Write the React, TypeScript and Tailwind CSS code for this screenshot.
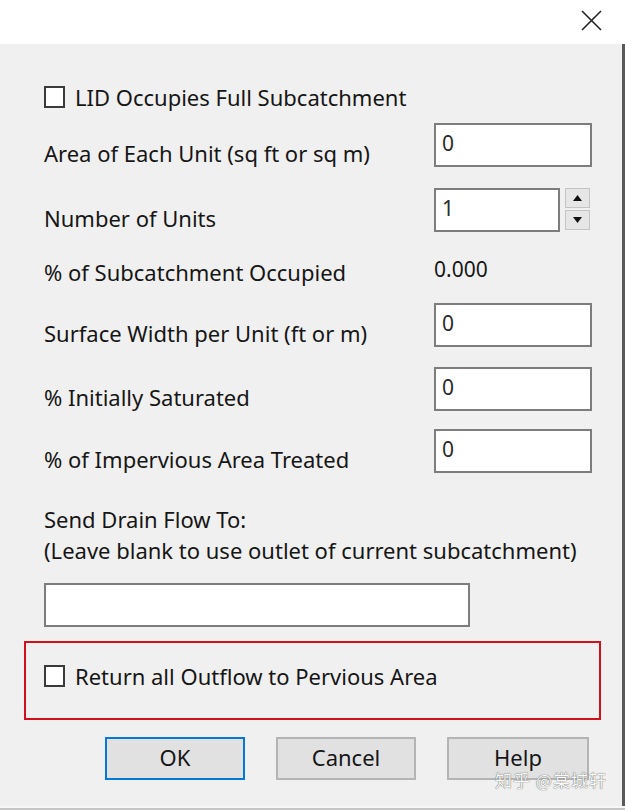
import React from "react";

const font = { fontFamily: '"Noto Sans", "Noto Sans CJK SC", sans-serif' };

function Box({ w = "w-[158px]", value = "" }: { w?: string; value?: string }) {
  return (
    <div className={`${w} h-[44px] bg-white border-2 border-[#7d7d7d] pl-[6px] pt-[4px] text-[21px] leading-[28px] text-[#2a2a2a]`}>
      {value}
    </div>
  );
}

function Check() {
  return <div className="w-[21px] h-[22px] bg-white border-2 border-[#3a3a3a] shrink-0" />;
}

function Row({ label, children, top }: { label: string; children: React.ReactNode; top: string }) {
  return (
    <div className={`flex items-start h-[44px] ${top}`}>
      <div className="w-[390px] pt-[16px] leading-[28px]">{label}</div>
      {children}
    </div>
  );
}

export default function App() {
  return (
    <div className="w-[625px] h-[810px] relative overflow-hidden text-[22px] text-[#161616]" style={font}>
      <div className="h-[44px] bg-white flex justify-end items-start pr-[23px] pt-[10px]">
        <svg width="21" height="21" viewBox="0 0 21 21">
          <path d="M1 1 L20 20 M20 1 L1 20" stroke="#222" strokeWidth="1.6" fill="none" />
        </svg>
      </div>
      <div className="h-[762px] bg-[#f0f0f0] border-r-[3px] border-[#5a5a5a] pl-[44px] flex flex-col">
        <div className="flex items-center gap-[10px] mt-[42px] h-[22px]">
          <Check />
          <span className="leading-[28px] -mt-[1px]">LID Occupies Full Subcatchment</span>
        </div>
        <Row label="Area of Each Unit (sq ft or sq m)" top="mt-[15px]">
          <Box value="0" />
        </Row>
        <Row label="Number of Units" top="mt-[21px]">
          <Box w="w-[126px]" value="1" />
          <div className="flex flex-col gap-[2px] ml-[5px]">
            <div className="w-[25px] h-[20px] bg-[#e6e6e6] border border-[#c4c4c4] flex items-center justify-center">
              <svg width="9" height="6" viewBox="0 0 9 6"><path d="M0 6 L4.5 0 L9 6 Z" fill="#111" /></svg>
            </div>
            <div className="w-[25px] h-[20px] bg-[#e6e6e6] border border-[#c4c4c4] flex items-center justify-center">
              <svg width="9" height="6" viewBox="0 0 9 6"><path d="M0 0 L4.5 6 L9 0 Z" fill="#111" /></svg>
            </div>
          </div>
        </Row>
        <div className="flex items-start h-[40px] mt-[20px]">
          <div className="w-[390px] pt-[6px] leading-[28px]">% of Subcatchment Occupied</div>
          <div className="pt-[3px] leading-[28px] text-[21px]">0.000</div>
        </div>
        <Row label="Surface Width per Unit (ft or m)" top="mt-[11px]">
          <Box value="0" />
        </Row>
        <Row label="% Initially Saturated" top="mt-[20px]">
          <Box value="0" />
        </Row>
        <Row label="% of Impervious Area Treated" top="mt-[18px]">
          <Box value="0" />
        </Row>
        <div className="mt-[31px] leading-[31px]">
          <div>Send Drain Flow To:</div>
          <div>(Leave blank to use outlet of current subcatchment)</div>
        </div>
        <div className="mt-[17px]">
          <Box w="w-[426px]" />
        </div>
        <div className="-ml-[20px] mt-[14px] w-[577px] h-[79px] border-2 border-[#d0101a] pl-[18px] pt-[21px]">
          <div className="flex items-center gap-[10px] h-[24px]">
            <Check />
            <span className="leading-[28px] -mt-[1px]">Return all Outflow to Pervious Area</span>
          </div>
        </div>
        <div className="flex mt-[17px] ml-[61px] gap-[31px]">
          <div className="w-[140px] h-[43px] bg-[#e1e1e1] border-2 border-[#0078d7] flex items-center justify-center pb-[3px]">OK</div>
          <div className="w-[140px] h-[43px] bg-[#e1e1e1] border-2 border-[#b4b4b4] flex items-center justify-center pb-[3px]">Cancel</div>
          <div className="w-[142px] h-[43px] bg-[#e1e1e1] border-2 border-[#b4b4b4] flex items-center justify-center pb-[3px]">Help</div>
        </div>
      </div>
      <div className="h-[2px] bg-[#f8f8f8]" />
      <div className="h-[2px] bg-[#c6c6c6]" />
      <div className="absolute left-[495px] top-[769px] text-[17px] leading-[22px] tracking-[1px] text-[#f8f8f8] [text-shadow:0_0_1px_#666,0_0_1px_#888]" style={{ fontFamily: '"Noto Sans CJK SC", sans-serif' }}>
        知乎 @棠城轩
      </div>
    </div>
  );
}
